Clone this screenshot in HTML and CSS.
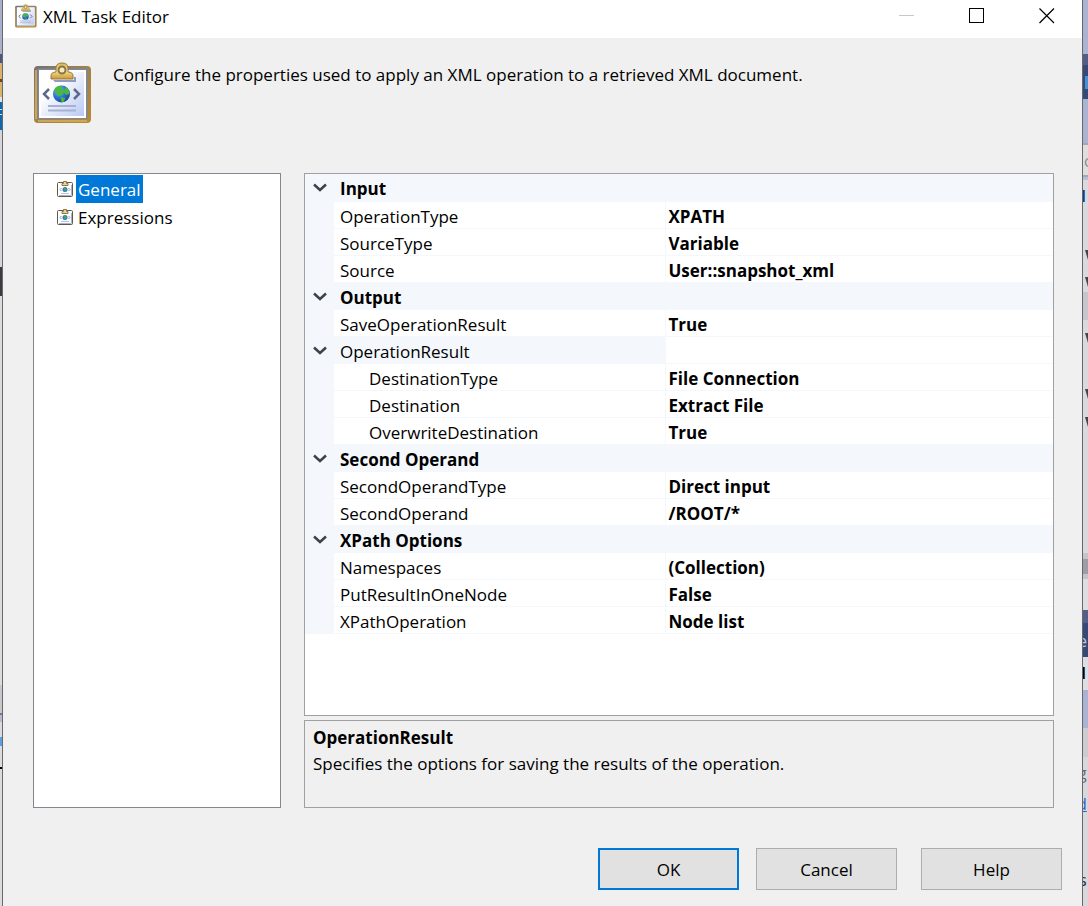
FILE: index.html
```
<!DOCTYPE html>
<html lang="en">
<head>
<meta charset="utf-8">
<title>XML Task Editor</title>
<link rel="stylesheet" href="styles.css">
</head>
<body>
<svg class="defs" aria-hidden="true">
  <defs>
    <linearGradient id="frame" x1="0" y1="0" x2="1" y2="1"><stop offset="0" stop-color="#77706a"/><stop offset=".4" stop-color="#9b8052"/><stop offset="1" stop-color="#b98a30"/></linearGradient>
    <linearGradient id="paper" x1="0" y1="0" x2="1" y2="1"><stop offset=".3" stop-color="#ffffff"/><stop offset="1" stop-color="#b9c9f3"/></linearGradient>
    <linearGradient id="brass" x1="0" y1="0" x2="0" y2="1"><stop offset="0" stop-color="#d6b760"/><stop offset=".5" stop-color="#f6dc8c"/><stop offset="1" stop-color="#c99a3c"/></linearGradient>
    <radialGradient id="sea" cx=".35" cy=".3" r=".8"><stop offset="0" stop-color="#8cc4f8"/><stop offset=".5" stop-color="#2a74d4"/><stop offset="1" stop-color="#123a88"/></radialGradient>
    <symbol id="task" viewBox="0 0 58 62">
      <rect x="0" y="4" width="57" height="57" rx="4" fill="url(#frame)"/>
      <path d="M2 8v49M4 59h49" stroke="#d9b25c" stroke-width="1.500" fill="none"/>
      <rect x="3.500" y="6.500" width="50" height="50.500" fill="#7c87a4"/>
      <rect x="5" y="8" width="47" height="48" fill="#fff"/>
      <rect x="7" y="10" width="43" height="44" fill="url(#paper)"/>
      <path d="M19 18h21v-3h2v5H21z" fill="#8f9cc0"/>
      <path d="M17 17v-3q0-4 5-4V6q0-5 6-5t6 5v4q5 0 5 4v3z" fill="url(#brass)" stroke="#9a7836"/>
      <circle cx="28" cy="8" r="3.500" fill="#f7ebb8" stroke="#8a7448" stroke-width="2"/>
      <path d="M15 27l-5 5 5 5M40 27l5 5-5 5" fill="none" stroke="#5a6a8c" stroke-width="2.500"/>
      <circle cx="27.500" cy="32" r="8.500" fill="url(#sea)"/>
      <path d="M20.500 27q3-4 8-3l-1 3 3 2-2 4-4 1-3-3zM26.500 35l5 1-2 4h-2zM31.500 25q4 2 4 7l-3 1-3-3z" fill="#49b83c"/>
      <path d="M14 44h28M14 48.500h28" stroke="#a6b2d2" stroke-width="2"/>
    </symbol>
    <symbol id="task-small" viewBox="0 0 16 16">
      <rect x=".5" y="1.500" width="15" height="14" rx="1" fill="#fff" stroke="#625846"/>
      <path d="M2 14.500h12.500M14.500 4v10" stroke="#a6b2d0"/>
      <path d="M5 4.500V2.500h1.500V.5h3v2H11v2z" fill="#e9d590" stroke="#8b7748"/>
      <path d="M4.500 7L3 8.500 4.500 10M11.500 7L13 8.500 11.500 10" fill="none" stroke="#8794b4"/>
      <circle cx="8" cy="8.500" r="2.500" fill="#3476c4"/>
      <path d="M6.500 7.500l2-1 1 2-1.500 2z" fill="#42ac50"/>
      <path d="M4 12.500h8" stroke="#b9c3da"/>
    </symbol>
    <symbol id="chevron" viewBox="0 0 14 9"><path d="M1 1.500l6 5.500 6-5.500" fill="none" stroke="#3f4248" stroke-width="2.500"/></symbol>
  </defs>
</svg>
<div class="desktop">
  <div class="behind behind-left"></div>
  <main class="dialog">
    <header class="titlebar">
      <svg class="title-icon"><use href="#task"/></svg>
      <h1 class="title">XML Task Editor</h1>
      <div class="window-buttons">
        <button class="window-button" aria-label="Minimize" disabled><svg class="glyph" viewBox="0 0 16 16"><path d="M0 7.500h15" stroke="#c8c8c8"/></svg></button>
        <button class="window-button" aria-label="Maximize"><svg class="glyph" viewBox="0 0 16 16"><rect x=".5" y=".5" width="14" height="14" fill="none" stroke="#000"/></svg></button>
        <button class="window-button" aria-label="Close"><svg class="glyph" viewBox="0 0 16 16"><path d="M.5.5l14.500 14.500M15 .5L.5 15" stroke="#000" stroke-width="1.200"/></svg></button>
      </div>
    </header>
    <section class="intro">
      <svg class="intro-icon"><use href="#task"/></svg>
      <p class="intro-text">Configure the properties used to apply an XML operation to a retrieved XML document.</p>
    </section>
    <div class="content">
      <nav class="tree">
        <a class="node" href="#general"><svg class="node-icon"><use href="#task-small"/></svg><span class="node-label selected">General</span></a>
        <a class="node" href="#expressions"><svg class="node-icon"><use href="#task-small"/></svg><span class="node-label">Expressions</span></a>
      </nav>
      <div class="editor">
        <div class="grid-box">
          <table class="properties">
            <colgroup><col class="col-gutter"><col class="col-name"><col></colgroup>
            <tbody>
              <tr class="category"><td><button class="toggle" aria-label="Collapse Input"><svg class="chevron"><use href="#chevron"/></svg></button></td><th colspan="2">Input</th></tr>
              <tr><td></td><th>OperationType</th><td>XPATH</td></tr>
              <tr><td></td><th>SourceType</th><td>Variable</td></tr>
              <tr><td></td><th>Source</th><td>User::snapshot_xml</td></tr>
              <tr class="category"><td><button class="toggle" aria-label="Collapse Output"><svg class="chevron"><use href="#chevron"/></svg></button></td><th colspan="2">Output</th></tr>
              <tr><td></td><th>SaveOperationResult</th><td>True</td></tr>
              <tr class="current"><td><button class="toggle" aria-label="Collapse OperationResult"><svg class="chevron"><use href="#chevron"/></svg></button></td><th>OperationResult</th><td></td></tr>
              <tr class="child"><td></td><th>DestinationType</th><td>File Connection</td></tr>
              <tr class="child"><td></td><th>Destination</th><td>Extract File</td></tr>
              <tr class="child"><td></td><th>OverwriteDestination</th><td>True</td></tr>
              <tr class="category"><td><button class="toggle" aria-label="Collapse Second Operand"><svg class="chevron"><use href="#chevron"/></svg></button></td><th colspan="2">Second Operand</th></tr>
              <tr><td></td><th>SecondOperandType</th><td>Direct input</td></tr>
              <tr><td></td><th>SecondOperand</th><td>/ROOT/*</td></tr>
              <tr class="category"><td><button class="toggle" aria-label="Collapse XPath Options"><svg class="chevron"><use href="#chevron"/></svg></button></td><th colspan="2">XPath Options</th></tr>
              <tr><td></td><th>Namespaces</th><td>(Collection)</td></tr>
              <tr><td></td><th>PutResultInOneNode</th><td>False</td></tr>
              <tr><td></td><th>XPathOperation</th><td>Node list</td></tr>
            </tbody>
          </table>
        </div>
        <section class="help-box">
          <h2 class="help-title">OperationResult</h2>
          <p class="help-text">Specifies the options for saving the results of the operation.</p>
        </section>
      </div>
    </div>
    <footer class="actions">
      <button class="action primary">OK</button>
      <button class="action">Cancel</button>
      <button class="action help">Help</button>
    </footer>
  </main>
  <div class="behind behind-right">
    <svg class="behind-marks" viewBox="0 0 5 906" aria-hidden="true">
      <path d="M2 76h3v13H2z" fill="#4293d8"/>
      <path d="M2 250h3v10zM2 277h3v10zM2 333h3v10zM2 389h3v10zM2 417h3v10z" fill="#44464a"/>
    </svg>
    <span class="peek peek-c">c</span>
    <span class="peek peek-in">l</span>
    <span class="peek peek-e">e</span>
    <span class="peek peek-l">l</span>
    <span class="peek peek-g">g</span>
    <span class="peek peek-d">d</span>
    <span class="peek peek-s">s</span>
  </div>
</div>
</body>
</html>
```
FILE: styles.css
```
* {
  box-sizing: border-box;
}

body {
  margin: 0;
  color: #000;
  font: 17px/24px "Open Sans", "Noto Sans", sans-serif;
}

h1, h2, p {
  margin: 0;
  font-size: inherit;
  font-weight: inherit;
}

button {
  font: inherit;
  color: inherit;
}

.defs {
  position: absolute;
  width: 0;
  height: 0;
}

.desktop {
  display: grid;
  grid-template-columns: 2px 1fr 5px;
  min-height: 100vh;
}

.behind-left {
  background: linear-gradient(#a9b0cc 54px, #4c5682 54px 63px, #d9b36b 63px 79px, #5d4b2c 79px 82px, #d9b36b 82px 97px, #e4e4e8 97px 102px, #0a69b1 102px 109px, #d8e8f4 109px 110px, #0a69b1 110px 114px, #d8e8f4 114px 115px, #0a69b1 115px 130px, #d6d6da 130px 267px, #3c3c40 267px 296px, #dcdcdf 296px 685px, #c8c8cc 685px 713px, #77777c 713px 715px, #b5bad0 715px 722px, #dcdcdf 722px 737px, #5ca0e0 737px 746px, #dcdcdf 746px 767px, #000 767px 769px, #dcdcdf 769px);
}

.behind-right {
  position: relative;
  overflow: hidden;
  background: linear-gradient(#a9b4d2 54px, #525d88 54px 65px, #364a7a 65px 99px, #a9b4d2 99px 143px, #a5a8b0 143px 145px, #e0dedd 145px 175px, #a5a8b0 175px 177px, #b4bfda 177px 180px, #dadade 180px 292px, #c6c5cc 292px 320px, #dadade 320px 553px, #c5c4c8 553px 559px, #9e9ca4 559px 574px, #c5c4c8 574px 579px, #dedee0 579px 610px, #525f88 610px 623px, #364a7a 623px 657px, #dedee0 657px 690px, #a9b4d2 690px 728px, #ccccd0 728px 757px, #d8d8dc 757px);
}

.behind-marks {
  display: block;
  width: 5px;
  height: 906px;
}

/* Letters of the window underneath, cut off by the dialog's edge. */
.peek {
  position: absolute;
  left: -5px;
  font-size: 16px;
}

.peek-c {
  top: 149px;
  left: 1px;
  color: #8c8c94;
}

.peek-in {
  top: 184px;
  left: -2px;
  color: #173f80;
  font-weight: 700;
}

.peek-e {
  top: 629px;
  color: #c4cadb;
}

.peek-l {
  top: 661px;
  left: -2px;
  font-weight: 700;
}

.peek-g {
  top: 761px;
  color: #6b6b70;
}

.peek-d {
  top: 792px;
  left: -6px;
  color: #2c63c8;
  text-decoration: underline;
}

.peek-s {
  top: 868px;
  left: -4px;
  color: #25282e;
}

.dialog {
  display: flex;
  flex-direction: column;
  background: #f0f0f0;
  border: solid #68686c;
  border-width: 0 1px;
}

.titlebar {
  display: flex;
  align-items: flex-start;
  height: 38px;
  padding-left: 12px;
  background: #fff;
}

.title-icon {
  width: 22px;
  height: 24px;
  margin-top: 4px;
}

.title {
  flex: 1;
  margin: 5px 0 0 6px;
}

.window-buttons {
  display: flex;
}

.window-button {
  display: grid;
  place-items: center;
  width: 70px;
  height: 32px;
  padding: 0;
  background: none;
  border: 0;
}

.glyph {
  width: 16px;
  height: 16px;
}

.intro {
  display: flex;
  align-items: flex-start;
  gap: 21px;
  height: 135px;
  padding: 24px 27px 0 31px;
}

.intro-icon {
  flex: none;
  width: 58px;
  height: 62px;
}

.intro-text {
  padding-top: 1px;
}

.content {
  flex: 1;
  display: grid;
  grid-template-columns: 248px 1fr;
  gap: 23px;
  padding: 0 28px 0 30px;
}

.tree {
  padding: 1px 0 0 23px;
  background: #fff;
  border: 1px solid #828790;
}

.node {
  display: flex;
  align-items: center;
  gap: 3px;
  height: 28px;
  color: inherit;
  text-decoration: none;
}

.node-icon {
  width: 16px;
  height: 16px;
}

.node-label {
  padding: 3px 2px 1px;
}

.selected {
  color: #fff;
  background: #0078d7;
}

.editor {
  display: flex;
  flex-direction: column;
  gap: 4px;
}

.grid-box {
  flex: 1;
  background: #fff;
  border: 1px solid #a0a0a0;
}

.properties {
  width: 100%;
  table-layout: fixed;
  border-collapse: collapse;
}

.col-gutter {
  width: 29px;
}

.col-name {
  width: 331px;
}

.properties tr {
  height: 27px;
}

.properties th,
.properties td {
  padding: 3px 0 0 3px;
  line-height: 23px;
  text-align: left;
  white-space: nowrap;
  border-bottom: 1px solid #f4f7fc;
}

.properties th {
  padding-left: 6px;
  font-weight: 400;
  border-right: 1px solid #f4f7fc;
}

.properties td {
  font-weight: 700;
}

.properties td:first-child,
.properties .category th,
.properties .current th {
  background: #f4f7fc;
}

.properties td:first-child {
  padding: 0;
}

.properties .category th {
  font-weight: 700;
}

.properties .child th {
  padding-left: 35px;
}

.toggle {
  display: grid;
  place-items: center;
  width: 29px;
  height: 26px;
  padding: 1px 0 0 1px;
  background: none;
  border: 0;
}

.chevron {
  width: 14px;
  height: 9px;
}

.help-box {
  height: 88px;
  padding: 4px 8px;
  line-height: 26px;
  border: 1px solid #a0a0a0;
}

.help-title {
  font-weight: 700;
}

.actions {
  display: flex;
  justify-content: flex-end;
  gap: 17px;
  padding: 40px 20px 16px;
}

.action {
  width: 141px;
  height: 42px;
  padding: 2px 0 0;
  background: #e1e1e1;
  border: 1px solid #adadad;
}

.primary {
  border: 2px solid #0078d7;
}

.help {
  margin-left: 7px;
}
```
